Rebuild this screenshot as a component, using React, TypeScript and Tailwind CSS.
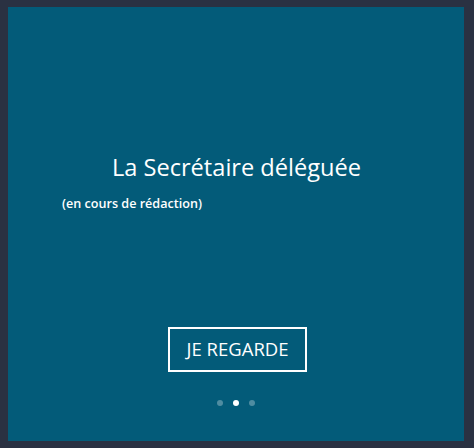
export default function App() {
  return (
    <div
      className="w-[474px] h-[448px] bg-[#2a3142] px-[8px] pt-[7px] pb-[7px]"
      style={{ fontFamily: '"Open Sans", "Noto Sans", sans-serif' }}
    >
      <div className="w-[456px] h-[434px] bg-[#035b79] flex flex-col pt-[144px]">
        <h1 className="text-center text-white text-[23.6px] leading-[32px] font-normal pl-[1px]">
          La Secrétaire déléguée
        </h1>
        <p className="mt-[12px] pl-[54px] text-white text-[12.6px] leading-[18px] font-semibold">
          (en cours de rédaction)
        </p>
        <div className="mt-[114px] flex justify-center">
          <button className="w-[139px] h-[45px] border-2 border-white text-white text-[18.5px] leading-none flex items-center justify-center pl-[1px] ml-[2px]">
            JE REGARDE
          </button>
        </div>
        <div className="mt-[28px] flex justify-center items-center gap-[10px]">
          <span className="w-[6px] h-[6px] rounded-full bg-white/30" />
          <span className="w-[6px] h-[6px] rounded-full bg-white" />
          <span className="w-[6px] h-[6px] rounded-full bg-white/30" />
        </div>
      </div>
    </div>
  );
}
